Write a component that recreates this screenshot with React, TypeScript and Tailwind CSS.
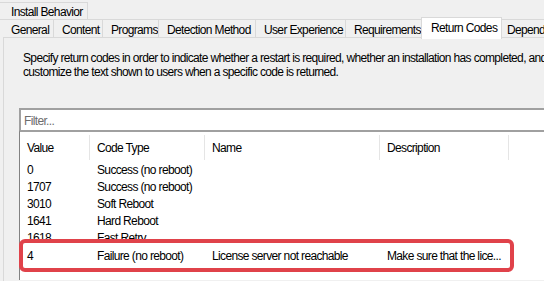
import React from "react";

const tabs = [
	{ label: "General", w: 50 },
	{ label: "Content", w: 49 },
	{ label: "Programs", w: 56 },
	{ label: "Detection Method", w: 97 },
	{ label: "User Experience", w: 90 },
	{ label: "Requirements", w: 76 },
];

const rows = [
	{ value: "0", type: "Success (no reboot)", name: "", desc: "" },
	{ value: "1707", type: "Success (no reboot)", name: "", desc: "" },
	{ value: "3010", type: "Soft Reboot", name: "", desc: "" },
	{ value: "1641", type: "Hard Reboot", name: "", desc: "" },
	{ value: "1618", type: "Fast Retry", name: "", desc: "" },
];

function Cells({ r }: { r: { value: string; type: string; name: string; desc: string } }) {
	return (
		<>
			<div className="w-[70px] shrink-0 pl-[7px]">{r.value}</div>
			<div className="w-[115px] shrink-0 pl-[7px]">{r.type}</div>
			<div className="w-[175px] shrink-0 pl-[7px]">{r.name}</div>
			<div className="w-[129px] shrink-0 pl-[7px]">{r.desc}</div>
		</>
	);
}

export default function App(): JSX.Element {
	return (
		<div className="w-[544px] h-[281px] overflow-hidden bg-[#f0f0f0] font-['Liberation_Sans',Arial,sans-serif] text-[12px] tracking-[-0.65px] text-black leading-none">
			{/* outer tab strip */}
			<div className="flex h-[19px] items-end">
				<div className="h-[17px] w-[88px] border-r border-t border-[#d9d9d9] pl-[11px] pt-[3px]">
					Install Behavior
				</div>
			</div>
			{/* page tabs */}
			<div className="flex h-[18px] border-t border-[#d9d9d9] pl-[3px]">
				{tabs.map((t) => (
					<div
						key={t.label}
						style={{ width: t.w }}
						className="h-[18px] shrink-0 border-l border-[#d9d9d9] pl-[8px] pt-[4px] first:border-l-0"
					>
						{t.label}
					</div>
				))}
				<div className="relative z-10 -mt-[3px] h-[22px] w-[81px] shrink-0 border-x border-t border-[#d9d9d9] bg-white pl-[9px] pt-[4px]">
					Return Codes
				</div>
				<div className="h-[18px] shrink-0 pl-[5px] pt-[4px] whitespace-nowrap">Dependencies</div>
			</div>
			{/* page body */}
			<div className="ml-[3px] h-[244px] border-l border-t border-[#d9d9d9] bg-[#f0f0f0]">
				<div className="whitespace-nowrap pl-[19px] pt-[13px] leading-[14px]">
					<div>
						Specify return codes in order to indicate whether a restart is required, whether an installation has
						completed, and
					</div>
					<div>customize the text shown to users when a specific code is returned.</div>
				</div>
				<div className="ml-[15px] mt-[29px]">
					<div className="h-[22px] border-l-2 border-t-2 border-l-[#a0a0a0] border-t-[#a0a0a0] bg-white pl-[3px] pt-[5px] text-[#6d6d6d]">
						Filter...
					</div>
					<div className="h-[150px] border-l border-t-2 border-[#a0a0a0] border-l-[#828282] bg-white">
						<div className="flex h-[29px] items-center pt-[2px]">
							{["Value", "Code Type", "Name", "Description"].map((h, i) => (
								<div
									key={h}
									className={`h-[25px] shrink-0 border-r border-[#e5e5e5] pl-[7px] pt-[7px] ${
										["w-[70px]", "w-[115px]", "w-[175px]", "w-[129px]"][i]
									}`}
								>
									{h}
								</div>
							))}
						</div>
						{rows.map((r) => (
							<div key={r.value} className="flex h-[17px] items-center">
								<Cells r={r} />
							</div>
						))}
						<div className="relative -mt-[7px] flex h-[33px] w-[495px] items-center rounded-[6px] border-4 border-[#e0424a] bg-white -ml-[1px] pl-[1px]">
							<div className="w-[66px] shrink-0 pl-[3px]">4</div>
							<div className="w-[115px] shrink-0 pl-[7px]">Failure (no reboot)</div>
							<div className="w-[175px] shrink-0 pl-[7px]">License server not reachable</div>
							<div className="w-[125px] shrink-0 pl-[7px] whitespace-nowrap">Make sure that the lice...</div>
						</div>
					</div>
				</div>
			</div>
		</div>
	);
}
